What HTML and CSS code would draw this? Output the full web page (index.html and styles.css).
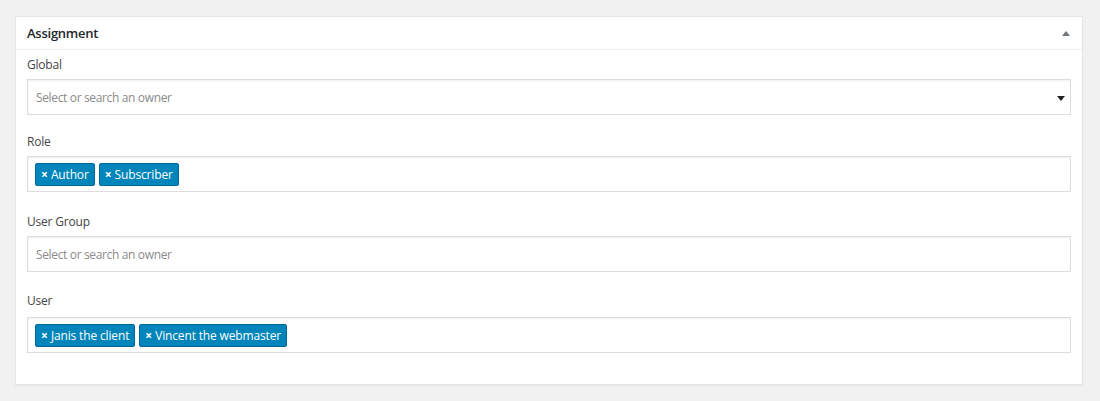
FILE: index.html
```html
<!DOCTYPE html>
<html>
<head>
<meta charset="utf-8">
<link rel="stylesheet" href="styles.css">
</head>
<body>
<div class="panel">
  <div class="panel-head">
    <h2 class="panel-title">Assignment</h2>
    <span class="toggle"></span>
  </div>
  <div class="panel-body">
    <div class="field f-global">
      <div class="label">Global</div>
      <div class="select">
        <span class="placeholder">Select or search an owner</span>
        <span class="caret"></span>
      </div>
    </div>
    <div class="field f-role">
      <div class="label">Role</div>
      <div class="select multi">
        <span class="tag"><span class="x">×</span>Author</span>
        <span class="tag"><span class="x">×</span>Subscriber</span>
      </div>
    </div>
    <div class="field f-group">
      <div class="label">User Group</div>
      <div class="select">
        <span class="placeholder">Select or search an owner</span>
      </div>
    </div>
    <div class="field f-user">
      <div class="label">User</div>
      <div class="select multi">
        <span class="tag"><span class="x">×</span>Janis the client</span>
        <span class="tag"><span class="x">×</span>Vincent the webmaster</span>
      </div>
    </div>
  </div>
</div>
</body>
</html>
```

FILE: styles.css
```css
html, body {
  margin: 0;
  padding: 0;
  background: #f1f1f1;
}
body {
  padding: 16px 17px 15px 15px;
  font-family: "Open Sans", "Noto Sans", sans-serif;
  font-size: 12px;
  color: #444;
}
.panel {
  background: #fff;
  border: 1px solid #e5e5e5;
  box-shadow: 0 1px 1px rgba(0,0,0,0.04);
}
.panel-head {
  display: flex;
  align-items: center;
  justify-content: space-between;
  height: 32px;
  padding: 0 12px 0 11px;
  border-bottom: 1px solid #eee;
}
.panel-title {
  margin: 0;
  font-size: 13px;
  font-weight: 600;
  color: #23282d;
  letter-spacing: -0.25px;
}
.toggle {
  width: 0;
  height: 0;
  border-left: 4px solid transparent;
  border-right: 4px solid transparent;
  border-bottom: 5px solid #72777c;
  margin-top: 1px;
}
.panel-body {
  padding: 6px 11px 31px 11px;
}
.field {
  display: flex;
  flex-direction: column;
}
.label {
  line-height: 18px;
  color: #444;
  font-size: 12px;
  letter-spacing: -0.2px;
  margin-bottom: 5px;
}
.f-role { margin-top: 18px; }
.f-group { margin-top: 21px; }
.f-user { margin-top: 20px; }
.f-user .label { margin-bottom: 7px; }
.select {
  display: flex;
  align-items: center;
  height: 36px;
  box-sizing: border-box;
  border: 1px solid #ddd;
  box-shadow: inset 0 1px 2px rgba(0,0,0,0.07);
  padding: 0 8px;
  position: relative;
}
.placeholder {
  color: #8a8a8a;
  font-size: 12px;
  letter-spacing: -0.35px;
}
.caret {
  position: absolute;
  right: 5px;
  top: 16px;
  width: 0;
  height: 0;
  border-left: 4px solid transparent;
  border-right: 4px solid transparent;
  border-top: 5px solid #222;
}
.multi {
  padding: 0 8px 0 7px;
  gap: 4px;
}
.tag {
  display: inline-flex;
  align-items: center;
  height: 23px;
  box-sizing: border-box;
  padding: 0 5px 0 5px;
  background: #0085ba;
  border: 1px solid #006799;
  border-radius: 2px;
  color: #fff;
  font-size: 12px;
  letter-spacing: -0.15px;
}
.x {
  font-weight: 700;
  margin-right: 3px;
  font-size: 12px;
  letter-spacing: 0;
}
```
